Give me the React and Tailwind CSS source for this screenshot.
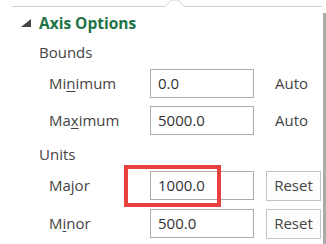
import React from "react";

function Field({ label, value, right }) {
  return (
    <div className="flex items-center h-[29px] pl-[49px]">
      <div className="w-[101px] text-[15px] text-[#444444]">{label}</div>
      <div className="w-[104px] h-[29px] border border-[#ababab] bg-white flex items-center pl-[7px] text-[15px] text-[#333333]">
        {value}
      </div>
      {right === "auto" ? (
        <div className="ml-[21px] text-[15px] text-[#444444]">Auto</div>
      ) : (
        <div className="ml-[12px] w-[55px] h-[30px] border border-[#c3c3c3] bg-[#fdfdfd] flex items-center justify-center text-[15px] text-[#444444]">
          Reset
        </div>
      )}
    </div>
  );
}

export default function App() {
  return (
    <div
      className="relative w-[326px] h-[244px] bg-white overflow-hidden flex flex-col"
      style={{ fontFamily: '"Open Sans", "Noto Sans", sans-serif' }}
    >
      <div className="h-[13px] shrink-0">
        <svg width="326" height="13" viewBox="0 0 326 13">
          <polyline
            points="12,6.5 165,6.5 171.5,0 178,0 184,6.5 322,6.5"
            fill="none"
            stroke="#cfcfcf"
            strokeWidth="1"
          />
        </svg>
      </div>
      <div className="flex flex-1 min-h-0">
        <div className="flex-1 flex flex-col">
          <div className="flex items-center h-[21px] pl-[21px]">
            <svg width="11" height="9" viewBox="0 0 11 9" className="mr-[7px]">
              <polygon points="0,8 10,8 10,0" fill="#454545" />
            </svg>
            <span className="text-[15.5px] font-bold text-[#217346]">Axis Options</span>
          </div>
          <div className="flex items-center h-[21px] mt-[8px] pl-[39px] text-[15px] text-[#444444]">
            Bounds
          </div>
          <div className="mt-[6px]">
            <Field
              label={<>Mi<span className="underline underline-offset-2">n</span>imum</>}
              value="0.0"
              right="auto"
            />
          </div>
          <div className="mt-[8px]">
            <Field
              label={<>Ma<span className="underline underline-offset-2">x</span>imum</>}
              value="5000.0"
              right="auto"
            />
          </div>
          <div className="flex items-center h-[21px] mt-[9px] pl-[39px] text-[15px] text-[#444444]">
            Units
          </div>
          <div className="mt-[6px] relative">
            <Field label="Major" value="1000.0" right="reset" />
            <div className="absolute left-[124px] top-[-6px] w-[97px] h-[42px] border-[4px] border-[#e8403f]" />
          </div>
          <div className="mt-[9px]">
            <Field
              label={<>M<span className="underline underline-offset-2">i</span>nor</>}
              value="500.0"
              right="reset"
            />
          </div>
        </div>
        <div className="w-[3px] bg-[#ababab] shrink-0" />
      </div>
    </div>
  );
}
